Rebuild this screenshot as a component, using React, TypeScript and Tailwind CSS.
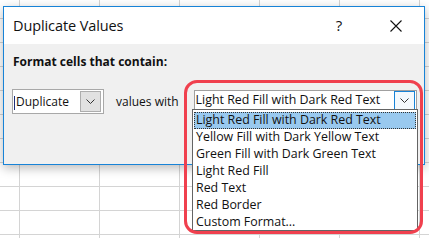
import React from "react";

const Chevron = ({ className = "" }: { className?: string }) => (
  <svg width="9" height="5" viewBox="0 0 9 5" className={className}>
    <path d="M0.5 0.5 L4.5 4.5 L8.5 0.5" fill="none" stroke="#333" strokeWidth="1" />
  </svg>
);

const items = [
  "Light Red Fill with Dark Red Text",
  "Yellow Fill with Dark Yellow Text",
  "Green Fill with Dark Green Text",
  "Light Red Fill",
  "Red Text",
  "Red Border",
  "Custom Format...",
];

export default function App() {
  return (
    <div
      className="relative w-[429px] h-[238px] overflow-hidden bg-white bg-[linear-gradient(to_right,#d4d4d4_1px,transparent_1px),linear-gradient(to_bottom,#d4d4d4_1px,transparent_1px)] bg-[length:80px_24px] bg-[position:19px_18px] text-[#1a1a1a]"
      style={{ fontFamily: '"Open Sans", "Noto Sans", sans-serif' }}
    >
      {/* Dialog window */}
      <div className="absolute left-[3px] top-[6px] w-[422px] h-[159px] border border-[#1883d7] bg-[#f0f0f0] shadow-[0_3px_10px_rgba(0,0,0,0.28)] flex flex-col">
        <div className="h-[37px] bg-white flex items-center pl-[9px] shrink-0">
          <span className="text-[14.5px] text-[#111] tracking-[-0.1px]">Duplicate Values</span>
          <span className="ml-auto text-[15px] text-[#111] w-[16px] text-center">?</span>
          <span className="ml-[41px] mr-[20px] w-[16px] flex items-center justify-center">
            <svg width="12" height="12" viewBox="0 0 12 12">
              <path d="M0.5 0.5 L11.5 11.5 M11.5 0.5 L0.5 11.5" stroke="#111" strokeWidth="1.1" fill="none" />
            </svg>
          </span>
        </div>
        <div className="flex flex-col pl-[9px] pt-[10px]">
          <div className="text-[12px] font-bold leading-[16px] text-[#111]">Format cells that contain:</div>
          <div className="flex items-center mt-[19px] h-[25px] ml-[-1px]">
            <div className="relative w-[92px] h-[25px] border border-[#a8a8a8] bg-white flex items-center">
              <span className="absolute left-[1px] top-[6px] w-[1px] h-[14px] bg-[#1c2f7a]" />
              <span className="pl-[3px] text-[12px] text-[#111]">Duplicate</span>
              <div className="ml-auto mr-[2px] w-[21px] h-[21px] border border-[#adadad] bg-[#e1e1e1] flex items-center justify-center">
                <Chevron />
              </div>
            </div>
            <span className="ml-[12px] text-[12px] text-[#111]">values with</span>
            <div className="ml-[15px] w-[223px] h-[22px] mt-[-2px] border border-[#a0a0a0] bg-white flex items-center">
              <span className="pl-[1px] text-[12.4px] text-[#111] whitespace-nowrap">Light Red Fill with Dark Red Text</span>
              <div className="ml-auto mr-[1px] w-[21px] h-[19px] border border-[#1883d7] bg-[#f4f9fd] flex items-center justify-center">
                <Chevron />
              </div>
            </div>
          </div>
        </div>
      </div>

      {/* Dropdown list */}
      <div className="absolute left-[192px] top-[109px] w-[226px] h-[122px] border border-[#646464] bg-white pt-[2px] px-[1px] flex flex-col">
        {items.map((t, i) => (
          <div
            key={t}
            className={
              i === 0
                ? "h-[17px] flex items-center pl-[2px] bg-[#99c9ef] outline-1 outline-dotted outline-[#333] -outline-offset-1 text-[12.4px] text-[#111] whitespace-nowrap"
                : "h-[17px] flex items-center pl-[2px] text-[12.4px] text-[#111] whitespace-nowrap"
            }
          >
            {t}
          </div>
        ))}
      </div>

      {/* Red highlight ring */}
      <div className="absolute left-[184px] top-[80px] w-[239px] h-[154px] border-[3px] border-[#f0404e] rounded-[13px]" />
    </div>
  );
}
